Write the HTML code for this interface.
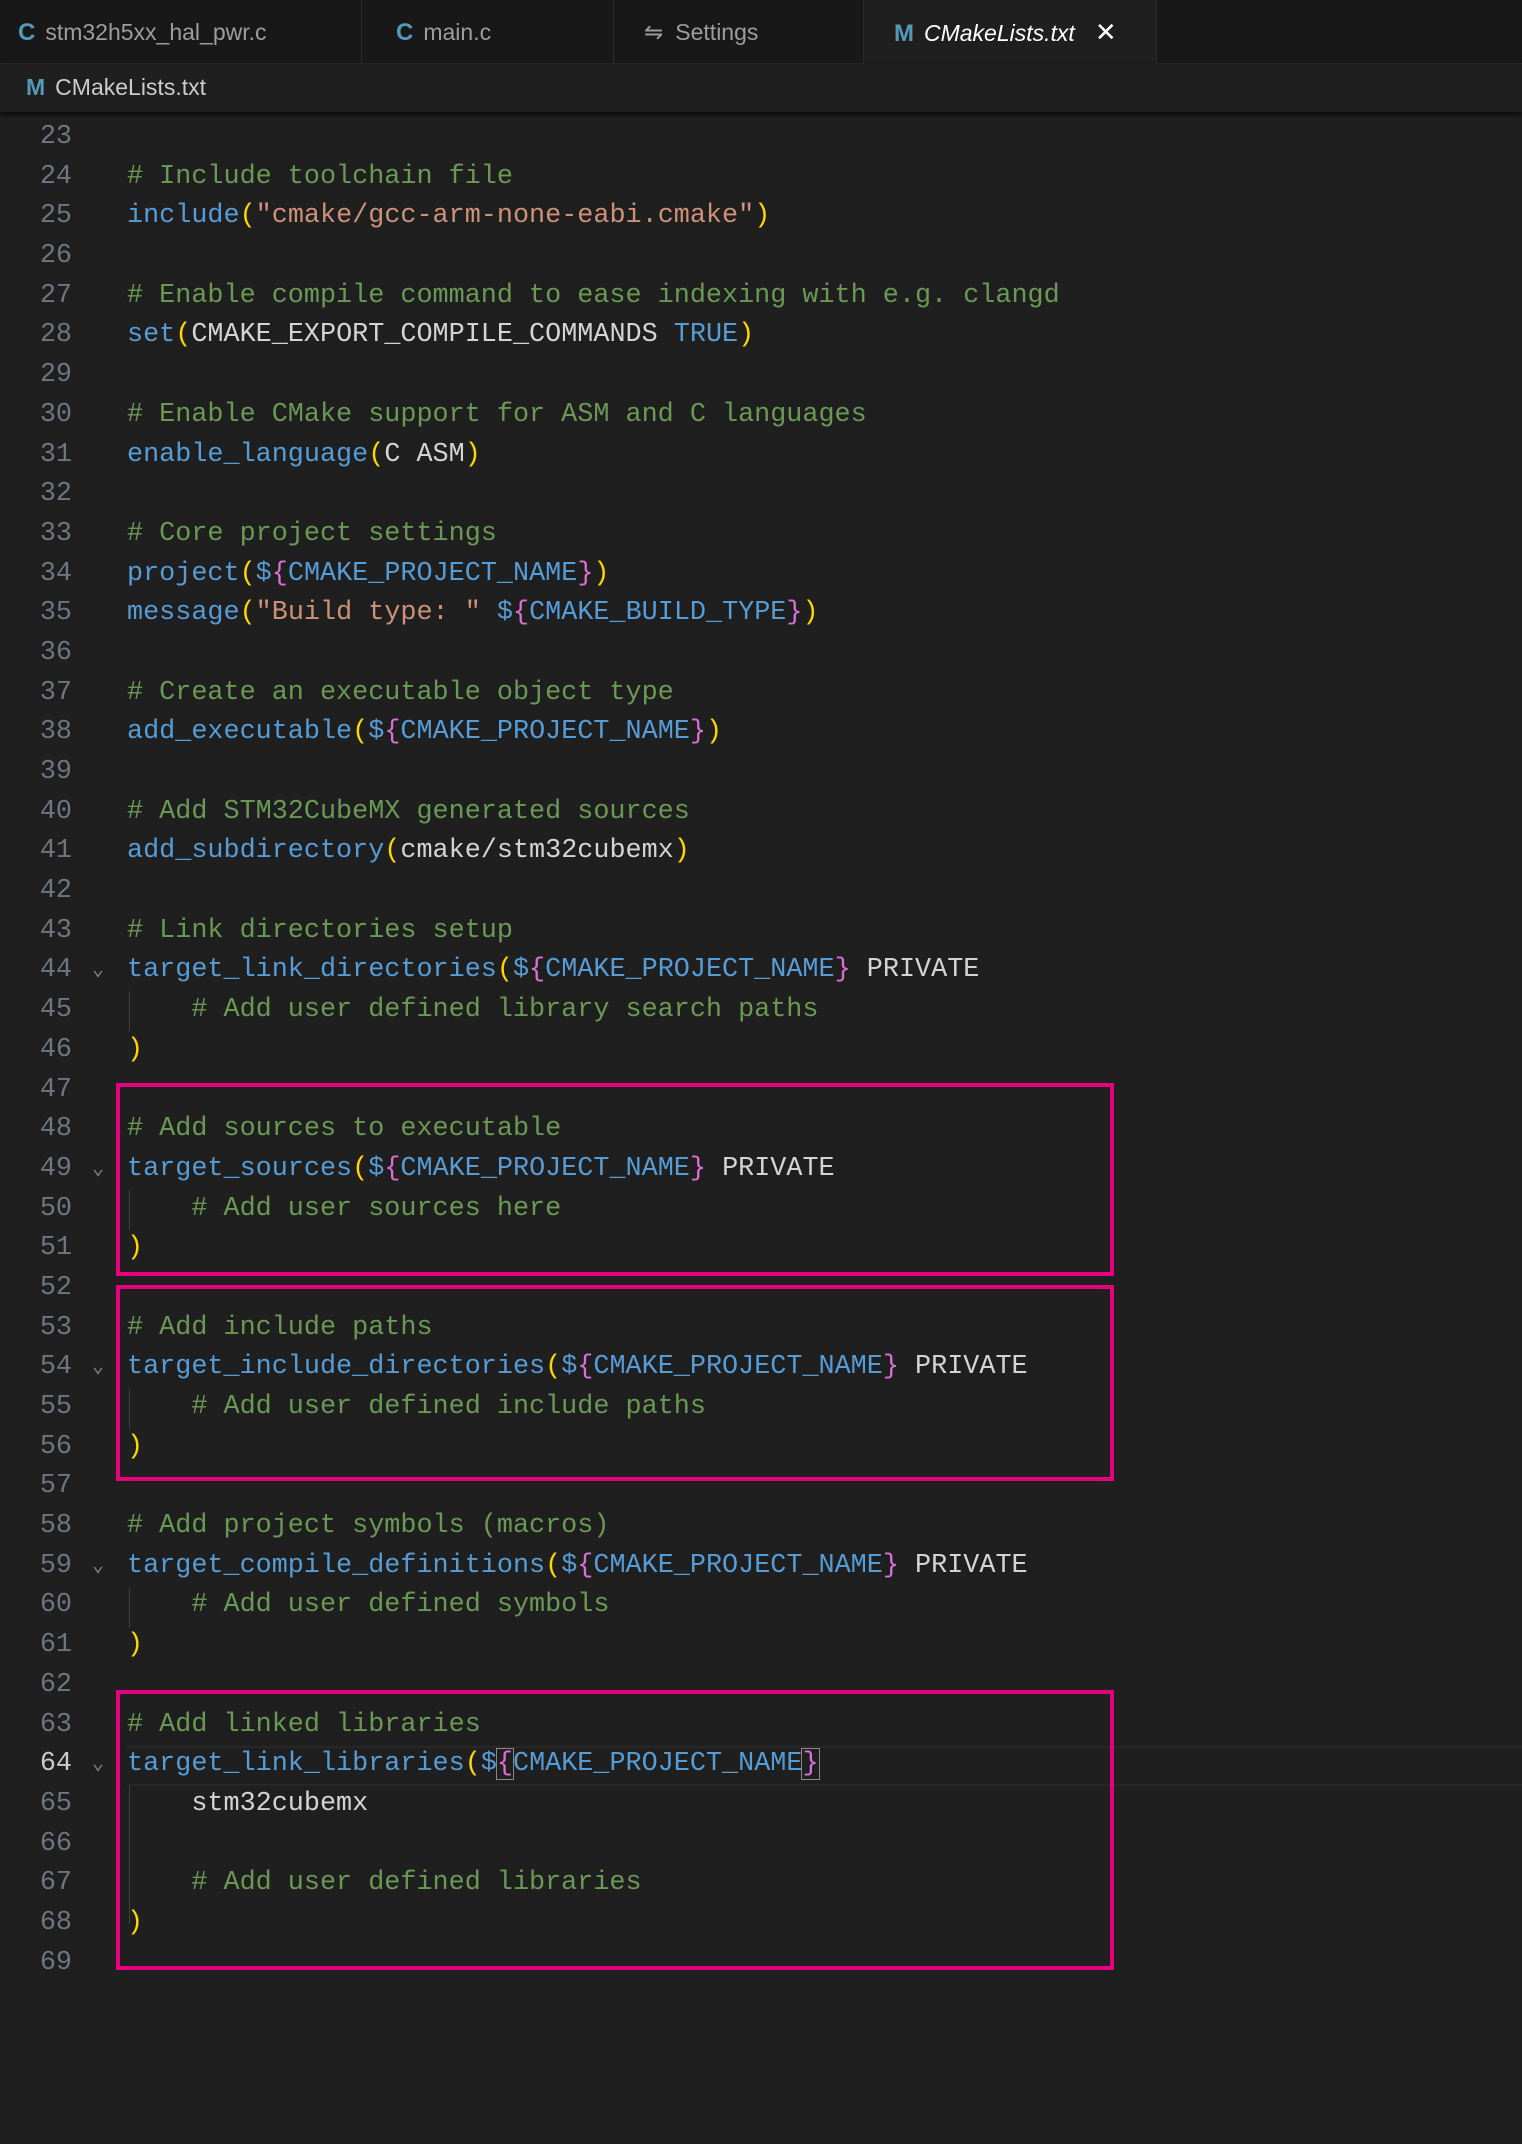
<!DOCTYPE html>
<html><head><meta charset="utf-8"><style>
*{margin:0;padding:0;box-sizing:border-box}
html,body{width:1522px;height:2144px;overflow:hidden}
body{background:#1f1f1f;position:relative;font-family:"Liberation Sans",sans-serif}
.tabs{position:absolute;left:0;top:0;width:1522px;height:64px;background:#181818;border-bottom:1px solid #2b2b2b}
.tab{position:absolute;top:0;height:64px;border-right:1px solid #2b2b2b;color:#9d9d9d;font-size:23px;line-height:64px;white-space:nowrap}
.tab .ic{font-weight:bold;color:#519aba;margin-right:10px;font-size:24px}
.tab.act{background:#1f1f1f;color:#fff;font-style:italic;height:65px}
.bc{position:absolute;left:0;top:64px;width:1522px;height:48px;background:#1f1f1f;color:#cccccc;font-size:23px;line-height:46px;box-shadow:0 3px 4px #0c0c0c}
.code{position:absolute;left:0;top:118px;width:1522px;font-family:"Liberation Mono",monospace;font-size:26.8px;line-height:39.7px}
.ln{position:relative;height:39.7px}
.n{position:absolute;left:0;width:72px;text-align:right;color:#6e7681}
.t{position:absolute;left:127px;color:#d4d4d4;white-space:pre}
.fd{position:absolute;left:92px;color:#848484;font-size:20px}
.c{color:#6a9955}.f{color:#569cd6}.s{color:#ce9178}.p{color:#ffd700}.b{color:#da70d6}.v{color:#569cd6}
.box{position:absolute;border:4px solid #e6007e}
.guide{position:absolute;left:129px;width:1px;background:#404040}
</style></head><body>
<div class="tabs">
<div class="tab" style="left:0;width:362px;padding-left:18px"><span class="ic">C</span>stm32h5xx_hal_pwr.c</div>
<div class="tab" style="left:362px;width:252px;padding-left:34px"><span class="ic">C</span>main.c</div>
<div class="tab" style="left:614px;width:250px;padding-left:30px"><span style="color:#9d9d9d;margin-right:12px">⇋</span>Settings</div>
<div class="tab act" style="left:864px;width:293px;padding-left:30px"><span class="ic" style="font-style:normal">M</span>CMakeLists.txt<span style="font-style:normal;margin-left:20px;font-size:26px">✕</span></div>
</div>
<div class="bc"><span style="font-weight:bold;color:#519aba;margin:0 10px 0 26px">M</span>CMakeLists.txt</div>
<div class="guide" style="top:991px;height:40px"></div>
<div class="guide" style="top:1190px;height:40px"></div>
<div class="guide" style="top:1389px;height:40px"></div>
<div class="guide" style="top:1588px;height:40px"></div>
<div class="guide" style="top:1786px;height:138px"></div>
<div style="position:absolute;left:127px;top:1746px;width:1395px;height:40px;border-top:2px solid #282828;border-bottom:2px solid #282828"></div>
<div class="code"><div class="ln"><span class="n">23</span></div><div class="ln"><span class="n">24</span><span class="t c"># Include toolchain file</span></div><div class="ln"><span class="n">25</span><span class="t"><span class="f">include</span><span class="p">(</span><span class="s">"cmake/gcc-arm-none-eabi.cmake"</span><span class="p">)</span></span></div><div class="ln"><span class="n">26</span></div><div class="ln"><span class="n">27</span><span class="t c"># Enable compile command to ease indexing with e.g. clangd</span></div><div class="ln"><span class="n">28</span><span class="t"><span class="f">set</span><span class="p">(</span>CMAKE_EXPORT_COMPILE_COMMANDS <span class="v">TRUE</span><span class="p">)</span></span></div><div class="ln"><span class="n">29</span></div><div class="ln"><span class="n">30</span><span class="t c"># Enable CMake support for ASM and C languages</span></div><div class="ln"><span class="n">31</span><span class="t"><span class="f">enable_language</span><span class="p">(</span>C ASM<span class="p">)</span></span></div><div class="ln"><span class="n">32</span></div><div class="ln"><span class="n">33</span><span class="t c"># Core project settings</span></div><div class="ln"><span class="n">34</span><span class="t"><span class="f">project</span><span class="p">(</span><span class="v">$</span><span class="b">{</span><span class="v">CMAKE_PROJECT_NAME</span><span class="b">}</span><span class="p">)</span></span></div><div class="ln"><span class="n">35</span><span class="t"><span class="f">message</span><span class="p">(</span><span class="s">"Build type: "</span> <span class="v">$</span><span class="b">{</span><span class="v">CMAKE_BUILD_TYPE</span><span class="b">}</span><span class="p">)</span></span></div><div class="ln"><span class="n">36</span></div><div class="ln"><span class="n">37</span><span class="t c"># Create an executable object type</span></div><div class="ln"><span class="n">38</span><span class="t"><span class="f">add_executable</span><span class="p">(</span><span class="v">$</span><span class="b">{</span><span class="v">CMAKE_PROJECT_NAME</span><span class="b">}</span><span class="p">)</span></span></div><div class="ln"><span class="n">39</span></div><div class="ln"><span class="n">40</span><span class="t c"># Add STM32CubeMX generated sources</span></div><div class="ln"><span class="n">41</span><span class="t"><span class="f">add_subdirectory</span><span class="p">(</span>cmake/stm32cubemx<span class="p">)</span></span></div><div class="ln"><span class="n">42</span></div><div class="ln"><span class="n">43</span><span class="t c"># Link directories setup</span></div><div class="ln"><span class="n">44</span><span class="fd">⌄</span><span class="t"><span class="f">target_link_directories</span><span class="p">(</span><span class="v">$</span><span class="b">{</span><span class="v">CMAKE_PROJECT_NAME</span><span class="b">}</span> PRIVATE</span></div><div class="ln"><span class="n">45</span><span class="t c">    # Add user defined library search paths</span></div><div class="ln"><span class="n">46</span><span class="t p">)</span></div><div class="ln"><span class="n">47</span></div><div class="ln"><span class="n">48</span><span class="t c"># Add sources to executable</span></div><div class="ln"><span class="n">49</span><span class="fd">⌄</span><span class="t"><span class="f">target_sources</span><span class="p">(</span><span class="v">$</span><span class="b">{</span><span class="v">CMAKE_PROJECT_NAME</span><span class="b">}</span> PRIVATE</span></div><div class="ln"><span class="n">50</span><span class="t c">    # Add user sources here</span></div><div class="ln"><span class="n">51</span><span class="t p">)</span></div><div class="ln"><span class="n">52</span></div><div class="ln"><span class="n">53</span><span class="t c"># Add include paths</span></div><div class="ln"><span class="n">54</span><span class="fd">⌄</span><span class="t"><span class="f">target_include_directories</span><span class="p">(</span><span class="v">$</span><span class="b">{</span><span class="v">CMAKE_PROJECT_NAME</span><span class="b">}</span> PRIVATE</span></div><div class="ln"><span class="n">55</span><span class="t c">    # Add user defined include paths</span></div><div class="ln"><span class="n">56</span><span class="t p">)</span></div><div class="ln"><span class="n">57</span></div><div class="ln"><span class="n">58</span><span class="t c"># Add project symbols (macros)</span></div><div class="ln"><span class="n">59</span><span class="fd">⌄</span><span class="t"><span class="f">target_compile_definitions</span><span class="p">(</span><span class="v">$</span><span class="b">{</span><span class="v">CMAKE_PROJECT_NAME</span><span class="b">}</span> PRIVATE</span></div><div class="ln"><span class="n">60</span><span class="t c">    # Add user defined symbols</span></div><div class="ln"><span class="n">61</span><span class="t p">)</span></div><div class="ln"><span class="n">62</span></div><div class="ln"><span class="n">63</span><span class="t c"># Add linked libraries</span></div><div class="ln"><span class="n" style="color:#ccc">64</span><span class="fd">⌄</span><span class="t"><span class="f">target_link_libraries</span><span class="p">(</span><span class="v">$</span><span class="b" style="outline:1px solid #888">{</span><span class="v">CMAKE_PROJECT_NAME</span><span class="b" style="outline:1px solid #888">}</span></span></div><div class="ln"><span class="n">65</span><span class="t">    stm32cubemx</span></div><div class="ln"><span class="n">66</span></div><div class="ln"><span class="n">67</span><span class="t c">    # Add user defined libraries</span></div><div class="ln"><span class="n">68</span><span class="t p">)</span></div><div class="ln"><span class="n">69</span></div></div>
<div class="box" style="left:116px;top:1083px;width:998px;height:193px"></div>
<div class="box" style="left:116px;top:1285px;width:998px;height:196px"></div>
<div class="box" style="left:116px;top:1690px;width:998px;height:280px"></div>
</body></html>
